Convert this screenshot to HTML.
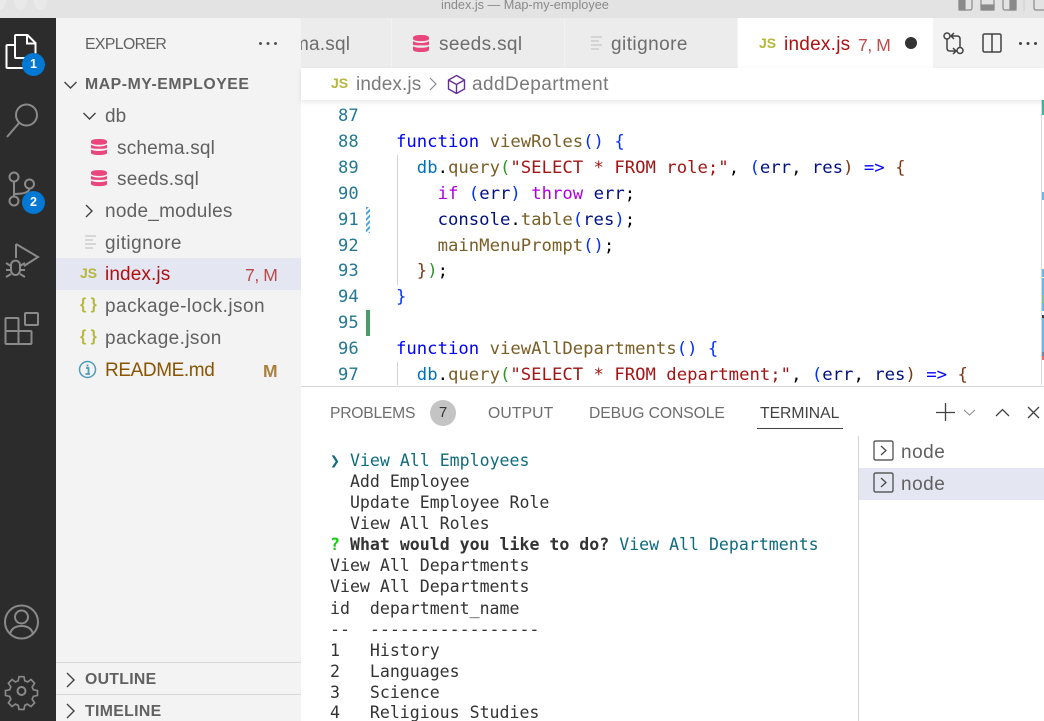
<!DOCTYPE html>
<html><head><meta charset="utf-8"><style>
html,body{margin:0;padding:0;background:#fff}
#r{position:relative;width:1044px;height:721px;overflow:hidden;background:#fff;font-family:"Liberation Sans",sans-serif}
#r div,#r svg{position:absolute}
.t{white-space:pre;line-height:24px;font-size:19px;color:#616161;margin-top:2px}
.j{margin-top:1px}
.c{font-family:"DejaVu Sans Mono",monospace;font-size:17.28px;white-space:pre;line-height:26px;color:#000;margin-top:1px}
.n{font-family:"DejaVu Sans Mono",monospace;font-size:17.15px;line-height:26px;color:#237893;left:338px;margin-top:1px}
.m{font-family:"DejaVu Sans Mono",monospace;font-size:16.57px;white-space:pre;line-height:21px;color:#333;left:330px}
.fn{color:#795e26}.kw{color:#00f}.b{color:#0431fa}.v{color:#001080}.s{color:#a31515}.o{color:#0070c1}.p{color:#af00db}.g{color:#319331}.br{color:#7b3814}
</style></head><body><div id="r">
<div style="left:0;top:0;width:1044px;height:18px;background:#e3e3e3"></div>
<div style="left:-8px;top:-8px;width:14px;height:18px;border-radius:50%;background:#e9e9e9"></div>
<div style="left:14px;top:-8px;width:13px;height:18px;border-radius:50%;background:#e9e9e9"></div>
<div style="left:34px;top:-8px;width:13px;height:18px;border-radius:50%;background:#e9e9e9"></div>
<div class="t" style="left:441px;top:-5px;font-size:12.7px;color:#8a8a8a;line-height:16px">index.js — Map-my-employee</div>
<svg style="left:955px;top:0" width="89" height="12" viewBox="0 0 89 12" fill="none" stroke="#8a8a8a" stroke-width="1.2"><rect x="4" y="-4" width="13" height="14" rx="2"/><rect x="4" y="-4" width="6" height="14" fill="#8a8a8a"/><rect x="26" y="-4" width="13" height="14" rx="2"/><rect x="26" y="5" width="13" height="5" fill="#8a8a8a"/><rect x="48" y="-4" width="13" height="14" rx="2"/><rect x="55" y="-4" width="6" height="14" fill="#8a8a8a"/><path d="M69 0v11" stroke="#d0d0d0"/><path d="M79 0v8q0 2 2 2h8"/></svg>

<!-- activity bar -->
<div style="left:0;top:18px;width:56px;height:703px;background:#2c2c2c"></div>
<svg style="left:0;top:18px" width="56" height="703" viewBox="0 0 56 703" fill="none">
<path d="M15 27H7.500Q6.500 27 6.500 28V49Q6.500 50 7.500 50H27Q28 50 28 49V40" stroke="#fff" stroke-width="2"/>
<path d="M15 39V18Q15 17 16 17H27.500L35.500 25V39Q35.500 40 34.500 40H16Q15 40 15 39ZM27 17V25.500H35.500" stroke="#fff" stroke-width="2"/>
<g stroke="#8a8a8a" stroke-width="2"><circle cx="26.500" cy="97" r="10.500"/><path d="M19 105L7 119"/></g>
<g stroke="#8a8a8a" stroke-width="2"><circle cx="14" cy="159" r="4.500"/><circle cx="14" cy="183" r="4.500"/><circle cx="29.500" cy="166" r="4.500"/><path d="M14 163.500V178.500M14 176Q29 176 29.500 170.500"/></g>
<g stroke="#8a8a8a" stroke-width="2"><path d="M16 226L38 239L24 248M16 226V240"/><path d="M11 246a5 6 0 0 1 9 0v6a4.500 5 0 0 1-9 0zM6 245l5 3M6 252h5M6 259l5-3M25 245l-5 3M25 252h-5M25 259l-5-3"/></g>
<g stroke="#8a8a8a" stroke-width="2"><rect x="5.500" y="300" width="13" height="13" rx="1"/><rect x="5.500" y="313" width="13" height="13" rx="1"/><rect x="18.500" y="313" width="13" height="13" rx="1"/><rect x="25" y="295" width="13" height="12" rx="1"/></g>
<g stroke="#8a8a8a" stroke-width="2"><circle cx="21.500" cy="604" r="16.500"/><circle cx="21.500" cy="599" r="6.500"/><path d="M10 616q2-8 11.500-8t11.500 8"/></g>
<g stroke="#8a8a8a" stroke-width="2"><circle cx="21.500" cy="673" r="4"/><path d="M18.500 656.500h6l1 5 3.500 1.500 4-3 4.500 4.500-3 4.500 1.500 3.500 5 1v6l-5 1-1.500 3.500 3 4.500-4.500 4.500-4.500-3-3 1.500-1 5h-6l-1-5-3.500-1.500-4 3-4.500-4.500 3-4.500-1.500-3.500-5-1v-6l5-1 1.500-3.500-3-4.500 4.500-4.500 4 3 3.500-1.500z" transform="translate(21.500 673) scale(.82) translate(-21.500 -674)"/></g>
</svg>
<div style="left:22px;top:53px;width:23px;height:23px;border-radius:50%;background:#0078d4;color:#fff;font:bold 12.500px/23px 'Liberation Sans';text-align:center">1</div>
<div style="left:22px;top:191px;width:23px;height:23px;border-radius:50%;background:#0078d4;color:#fff;font:bold 12.500px/23px 'Liberation Sans';text-align:center">2</div>

<!-- sidebar -->
<div style="left:56px;top:18px;width:245px;height:703px;background:#f3f3f3"></div>
<div class="t" style="left:85px;top:31px;font-size:15.800px;letter-spacing:-.6px">EXPLORER</div>
<div style="left:259px;top:42px;width:3px;height:3px;border-radius:50%;background:#555;box-shadow:7.500px 0 #555,15px 0 #555"></div>
<svg style="left:56px;top:18px" width="245" height="703" viewBox="0 0 245 703" fill="none" stroke="#424242" stroke-width="1.400">
<path d="M8.500 64l6 6 6-6M27.500 95l6 6 6-6M30 187l6 6-6 6M11 655l7 7-7 7M11 686l7 7-7 7"/>
<g stroke="#c5c5c5" stroke-width="1.200"><path d="M29 218h11M29 222h8M29 226h11M29 230h8"/></g>
</svg>
<svg style="left:90px;top:139px" width="18" height="48" viewBox="0 0 18 54" preserveAspectRatio="none" fill="#e8467c"><path d="M1 3q0-3 8-3t8 3v1q0 2.500-8 2.500T1 4zM1 6.500q3 2 8 2t8-2v3.500q0 1-8 1t-8-1zM1 12q3 1.500 8 1.500t8-1.500v3.500q0 2.500-8 2.500t-8-2.500z"/><path transform="translate(0,35)" d="M1 3q0-3 8-3t8 3v1q0 2.500-8 2.500T1 4zM1 6.500q3 2 8 2t8-2v3.500q0 1-8 1t-8-1zM1 12q3 1.500 8 1.500t8-1.500v3.500q0 2.500-8 2.500t-8-2.500z"/></svg>
<div class="t" style="left:85px;top:71px;font-size:15.800px;font-weight:bold;letter-spacing:.55px">MAP-MY-EMPLOYEE</div>
<div class="t" style="left:105px;top:103px">db</div>
<div class="t" style="left:117px;top:135px;letter-spacing:.2px">schema.sql</div>
<div class="t" style="left:117px;top:166px;letter-spacing:.2px">seeds.sql</div>
<div class="t" style="left:105px;top:198px;letter-spacing:.25px">node_modules</div>
<div class="t" style="left:105px;top:230px;letter-spacing:.45px">gitignore</div>
<div style="left:56px;top:258px;width:245px;height:32px;background:#e4e6f1"></div>
<div class="t j" style="left:80px;top:260px;font-size:14px;font-weight:bold;color:#b7b73b">JS</div>
<div class="t" style="left:105px;top:261px;color:#b01011;letter-spacing:.12px">index.js</div>
<div class="t" style="left:245px;top:261px;font-size:17.500px;color:#b84a4a;letter-spacing:-.4px">7, M</div>
<div class="t j" style="left:80px;top:292px;font-size:16px;font-weight:bold;color:#b7b73b">{ }</div>
<div class="t" style="left:105px;top:293px;letter-spacing:.47px">package-lock.json</div>
<div class="t j" style="left:80px;top:324px;font-size:16px;font-weight:bold;color:#b7b73b">{ }</div>
<div class="t" style="left:105px;top:325px;letter-spacing:.4px">package.json</div>
<svg style="left:78px;top:360px" width="19" height="19" viewBox="0 0 19 19" fill="none"><circle cx="9.500" cy="9.500" r="8" stroke="#519aba" stroke-width="1.500"/><path d="M8 8h2.500v5.500M7.500 14h4.500M9.500 4.500v2" stroke="#519aba" stroke-width="1.800"/></svg>
<div class="t" style="left:105px;top:357px;color:#895503;letter-spacing:-.4px">README.md</div>
<div class="t" style="left:263px;top:357px;font-size:17.500px;font-weight:bold;color:#a9803f">M</div>
<div style="left:56px;top:662px;width:245px;height:1px;background:#d9d9d9"></div>
<div style="left:56px;top:694px;width:245px;height:1px;background:#d9d9d9"></div>
<div class="t" style="left:85px;top:666px;font-size:15.800px;font-weight:bold;letter-spacing:.3px">OUTLINE</div>
<div class="t" style="left:85px;top:698px;font-size:15.800px;font-weight:bold;letter-spacing:.35px">TIMELINE</div>

<!-- tabs -->
<div style="left:301px;top:18px;width:743px;height:50px;background:#ececec"></div>
<div style="left:391px;top:18px;width:1px;height:50px;background:#f3f3f3"></div>
<div style="left:564px;top:18px;width:1px;height:50px;background:#f3f3f3"></div>
<div style="left:737px;top:18px;width:1px;height:50px;background:#f3f3f3"></div>
<div class="t" style="left:301px;top:31px;overflow:hidden;width:60px;color:#6d6d6d;letter-spacing:.2px"><span style="margin-left:-8px">ma.sql</span></div>
<svg style="left:412px;top:35px" width="18" height="17" viewBox="0 0 18 18" preserveAspectRatio="none" fill="#e8467c"><path d="M1 3q0-3 8-3t8 3v1q0 2.500-8 2.500T1 4zM1 6.500q3 2 8 2t8-2v3.500q0 1-8 1t-8-1zM1 12q3 1.500 8 1.500t8-1.500v3.500q0 2.500-8 2.500t-8-2.500z"/></svg>
<div class="t" style="left:439px;top:31px;color:#6d6d6d;letter-spacing:.35px">seeds.sql</div>
<svg style="left:590px;top:36px" width="13" height="14" viewBox="0 0 13 14" fill="none" stroke="#c5c5c5" stroke-width="1.200"><path d="M1 1h11M1 5h8M1 9h11M1 13h8"/></svg>
<div class="t" style="left:611px;top:31px;color:#6d6d6d;letter-spacing:.45px">gitignore</div>
<div style="left:738px;top:18px;width:195px;height:50px;background:#fff"></div>
<div style="left:933px;top:18px;width:111px;height:50px;background:#f3f3f3"></div>
<div class="t j" style="left:759px;top:30px;font-size:14px;font-weight:bold;color:#b7b73b">JS</div>
<div class="t" style="left:784px;top:31px;color:#b01011;letter-spacing:.25px">index.js</div>
<div class="t" style="left:858px;top:31px;font-size:17.500px;color:#c04c4c;letter-spacing:-.4px">7, M</div>
<div style="left:905px;top:37px;width:12px;height:12px;border-radius:50%;background:#333"></div>
<svg style="left:940px;top:29px" width="104" height="28" viewBox="0 0 104 28" fill="none" stroke="#424242" stroke-width="1.500">
<circle cx="7" cy="7" r="3"/><circle cx="20" cy="21.500" r="3"/><path d="M7 10v9q0 3 3 3h6M13 19l3 3-3 3M20 18.500V10q0-3-3-3h-6M14 4l-3 3 3 3"/>
<rect x="43" y="5" width="18" height="18" rx="1.500"/><path d="M52 5v18"/>
</svg>
<div style="left:1019px;top:42px;width:3px;height:3px;border-radius:50%;background:#444;box-shadow:7.500px 0 #444,15px 0 #444"></div>

<!-- breadcrumb -->
<div style="left:301px;top:68px;width:743px;height:32px;background:#fff;box-shadow:0 2px 5px rgba(0,0,0,.1);z-index:2"></div>
<div class="t j" style="left:331px;top:70px;font-size:14px;font-weight:bold;color:#b7b73b;z-index:3">JS</div>
<div class="t" style="left:356px;top:71px;color:#7a7a7a;z-index:3;letter-spacing:.12px">index.js</div>
<svg style="left:428px;top:74px;z-index:3" width="44" height="20" viewBox="0 0 44 20" fill="none"><path d="M2 4l6 6-6 6" stroke="#8a8a8a" stroke-width="1.200"/><path d="M28.500 1.500l8 4.500v9l-8 4.500-8-4.500V6zM20.500 6l8 4.500 8-4.500M28.500 10.500v9" stroke="#652d90" stroke-width="1.400"/></svg>
<div class="t" style="left:472px;top:71px;color:#7a7a7a;z-index:3;letter-spacing:.45px">addDepartment</div>

<!-- editor -->
<div class="n" style="top:102px">87</div><div class="n" style="top:128px">88</div><div class="n" style="top:154px">89</div><div class="n" style="top:180px">90</div><div class="n" style="top:206px">91</div><div class="n" style="top:232px">92</div><div class="n" style="top:257px">93</div><div class="n" style="top:283px">94</div><div class="n" style="top:309px">95</div><div class="n" style="top:335px">96</div><div class="n" style="top:361px">97</div>
<svg style="left:366px;top:207px" width="5" height="26" viewBox="0 0 5 26"><defs><pattern id="h" width="4" height="4" patternUnits="userSpaceOnUse" patternTransform="rotate(45)"><rect width="2" height="4" fill="#4aa3df"/></pattern></defs><rect width="4" height="26" fill="url(#h)"/></svg>
<div style="left:366px;top:310px;width:4px;height:26px;background:#4d9a68"></div>
<div style="left:397px;top:155px;width:1px;height:130px;background:#d3d3d3"></div>
<div style="left:397px;top:362px;width:1px;height:23px;background:#d3d3d3"></div>
<div class="c" style="left:396px;top:128px"><span class="kw">function</span> <span class="fn">viewRoles</span><span class="b">()</span> <span class="b">{</span></div>
<div class="c" style="left:396px;top:154px">  <span class="o">db</span>.<span class="fn">query</span><span class="g">(</span><span class="s">"SELECT * FROM role;"</span>, <span class="b">(</span><span class="v">err</span>, <span class="v">res</span><span class="br">)</span> <span class="kw">=&gt;</span> <span class="br">{</span></div>
<div class="c" style="left:396px;top:180px">    <span class="p">if</span> <span class="b">(</span><span class="v">err</span><span class="b">)</span> <span class="p">throw</span> <span class="v">err</span>;</div>
<div class="c" style="left:396px;top:206px">    <span class="v">console</span>.<span class="fn">table</span><span class="b">(</span><span class="v">res</span><span class="b">)</span>;</div>
<div class="c" style="left:396px;top:232px">    <span class="fn">mainMenuPrompt</span><span class="b">()</span>;</div>
<div class="c" style="left:396px;top:257px">  <span class="br">}</span><span class="g">)</span>;</div>
<div class="c" style="left:396px;top:283px"><span class="b">}</span></div>
<div class="c" style="left:396px;top:335px"><span class="kw">function</span> <span class="fn">viewAllDepartments</span><span class="b">()</span> <span class="b">{</span></div>
<div class="c" style="left:396px;top:361px">  <span class="o">db</span>.<span class="fn">query</span><span class="g">(</span><span class="s">"SELECT * FROM department;"</span>, <span class="b">(</span><span class="v">err</span>, <span class="v">res</span><span class="br">)</span> <span class="kw">=&gt;</span> <span class="br">{</span></div>
<div style="left:1041px;top:100px;width:3px;height:285px;background:#fff;border-left:1px solid #d8d8d8"></div>
<div style="left:1042px;top:100px;width:2px;height:15px;background:#3fb5a0"></div>
<div style="left:1042px;top:192px;width:2px;height:8px;background:#65b8ec"></div>
<div style="left:1042px;top:269px;width:2px;height:8px;background:#65b8ec"></div>
<div style="left:1042px;top:278px;width:2px;height:33px;background:#65b8ec"></div>
<div style="left:1042px;top:295px;width:2px;height:8px;background:#74c5a0"></div>
<div style="left:1042px;top:315px;width:2px;height:3px;background:#2c3e50"></div>
<div style="left:1042px;top:318px;width:2px;height:34px;background:#65b8ec"></div>
<div style="left:1042px;top:352px;width:2px;height:4px;background:#7f7fa8"></div>
<div style="left:1042px;top:356px;width:2px;height:4px;background:#f06a6a"></div>

<!-- panel -->
<div style="left:301px;top:386px;width:743px;height:1px;background:#d4d4d4"></div>
<div class="t" style="left:330px;top:400px;font-size:15.700px;color:#6d6d6d;letter-spacing:-.25px">PROBLEMS</div>
<div style="left:430px;top:400px;width:26px;height:26px;border-radius:50%;background:#c4c4c4;color:#333;font:15px/26px 'Liberation Sans';text-align:center">7</div>
<div class="t" style="left:488px;top:400px;font-size:15.700px;color:#6d6d6d;letter-spacing:.15px">OUTPUT</div>
<div class="t" style="left:589px;top:400px;font-size:15.700px;color:#6d6d6d;letter-spacing:-.08px">DEBUG CONSOLE</div>
<div class="t" style="left:760px;top:400px;font-size:15.700px;color:#424242">TERMINAL</div>
<div style="left:757px;top:428px;width:86px;height:1px;background:#424242"></div>
<svg style="left:930px;top:400px" width="114" height="26" viewBox="0 0 114 26" fill="none" stroke="#424242" stroke-width="1.300">
<path d="M15.500 3v18M6 12.500h19"/><path d="M34 10l5.500 5 5.500-5" stroke="#888" stroke-width="1"/><path d="M66 16l6.500-6.500 6.500 6.500"/><path d="M98 7l11 11M109 7l-11 11"/>
</svg>
<div style="left:858px;top:436px;width:1px;height:285px;background:#d4d4d4"></div>
<div style="left:859px;top:468px;width:185px;height:32px;background:#e4e6f1"></div>
<svg style="left:873px;top:440px" width="22" height="54" viewBox="0 0 22 54" fill="none" stroke="#424242" stroke-width="1.200"><rect x="1" y="1" width="19" height="19" rx="1.500"/><path d="M8 6l5 4.500-5 4.500"/><rect x="1" y="33" width="19" height="19" rx="1.500"/><path d="M8 38l5 4.500-5 4.500"/></svg>
<div class="t" style="left:901px;top:439px;letter-spacing:.5px">node</div>
<div class="t" style="left:901px;top:471px;letter-spacing:.5px">node</div>
<div class="m" style="top:450px"><span style="color:#0f6b7f;font-weight:bold">❯</span> <span style="color:#0f6b7f">View All Employees</span></div>
<div class="m" style="top:471px">  Add Employee</div>
<div class="m" style="top:492px">  Update Employee Role</div>
<div class="m" style="top:513px">  View All Roles</div>
<div class="m" style="top:534px"><span style="color:#14ce14;font-weight:bold">?</span> <b>What would you like to do?</b> <span style="color:#0f6b7f">View All Departments</span></div>
<div class="m" style="top:555px">View All Departments</div>
<div class="m" style="top:576px">View All Departments</div>
<div class="m" style="top:598px">id  department_name</div>
<div class="m" style="top:619px">--  -----------------</div>
<div class="m" style="top:640px">1   History</div>
<div class="m" style="top:661px">2   Languages</div>
<div class="m" style="top:682px">3   Science</div>
<div class="m" style="top:702px">4   Religious Studies</div>
</div></body></html>
